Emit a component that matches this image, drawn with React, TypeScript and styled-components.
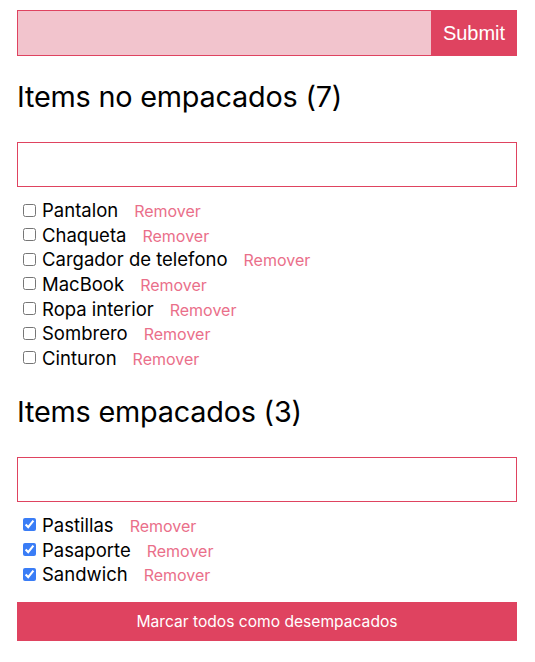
import React, { useState } from "react";
import styled, { createGlobalStyle } from "styled-components";

const GlobalStyle = createGlobalStyle`
  html, body { margin: 0; padding: 0; background: #ffffff; }
  body { font-family: Inter, "Noto Sans", sans-serif; color: #000; }
  * { box-sizing: border-box; }
`;

const RED = "#df4360";

const Page = styled.div`
  width: 500px;
  margin-left: 17px;
  padding-top: 10px;
  display: flex;
  flex-direction: column;
`;

const Form = styled.form`
  display: flex;
  height: 46px;
  margin: 0;
`;

const MainInput = styled.input`
  flex: 1;
  height: 100%;
  background: #f2c4cd;
  border: 1px solid ${RED};
  border-right: none;
  outline: none;
  font-size: 18px;
  padding: 0 10px;
`;

const SubmitButton = styled.button`
  width: 86px;
  height: 100%;
  background: ${RED};
  border: 1px solid ${RED};
  color: #fff;
  font-family: "Liberation Sans", Arial, sans-serif;
  font-size: 20px;
  padding: 0;
`;

const Heading = styled.h2<{ $top: number }>`
  margin: ${(p) => p.$top}px 0 0 0;
  font-size: 28.8px;
  line-height: 36px;
  font-weight: 400;
  letter-spacing: -0.2px;
`;

const FilterInput = styled.input`
  display: block;
  width: 100%;
  height: 45px;
  margin-top: 26.6px;
  border: 1px solid ${RED};
  background: #fff;
  outline: none;
  font-size: 18px;
  padding: 0 10px;
`;

const List = styled.ul`
  list-style: none;
  margin: 10.7px 0 0 0;
  padding: 0;
`;

const Row = styled.li`
  display: flex;
  align-items: center;
  height: 24.67px;
  padding-left: 1px;
`;

const Check = styled.input`
  width: 13px;
  height: 13px;
  margin: 0 6px 0 5px;
  accent-color: #3a7df6;
`;

const ItemName = styled.span`
  font-size: 18.5px;
  line-height: 24px;
  color: #000;
`;

const RemoveButton = styled.button`
  margin-left: 16px;
  padding: 0;
  border: none;
  background: none;
  color: #ea6f8a;
  font-family: Inter, "Noto Sans", sans-serif;
  font-size: 16px;
  line-height: 24px;
  margin-top: 2px;
  cursor: pointer;
`;

const WideButton = styled.button`
  margin-top: 15.4px;
  width: 100%;
  height: 39px;
  background: ${RED};
  border: 1px solid ${RED};
  color: #fff;
  font-family: Inter, "Noto Sans", sans-serif;
  font-size: 15.6px;
  padding: 0;
`;

type Item = { name: string; packed: boolean };

const initial: Item[] = [
  { name: "Pantalon", packed: false },
  { name: "Chaqueta", packed: false },
  { name: "Cargador de telefono", packed: false },
  { name: "MacBook", packed: false },
  { name: "Ropa interior", packed: false },
  { name: "Sombrero", packed: false },
  { name: "Cinturon", packed: false },
  { name: "Pastillas", packed: true },
  { name: "Pasaporte", packed: true },
  { name: "Sandwich", packed: true },
];

function ItemList({ items }: { items: Item[] }) {
  return (
    <List>
      {items.map((it) => (
        <Row key={it.name}>
          <Check type="checkbox" checked={it.packed} readOnly />
          <ItemName>{it.name}</ItemName>
          <RemoveButton type="button">Remover</RemoveButton>
        </Row>
      ))}
    </List>
  );
}

export default function App() {
  const [items] = useState(initial);
  const unpacked = items.filter((i) => !i.packed);
  const packed = items.filter((i) => i.packed);
  return (
    <>
      <GlobalStyle />
      <Page>
        <Form onSubmit={(e) => e.preventDefault()}>
          <MainInput type="text" />
          <SubmitButton type="submit">Submit</SubmitButton>
        </Form>
        <Heading $top={23.4}>Items no empacados ({unpacked.length})</Heading>
        <FilterInput type="text" />
        <ItemList items={unpacked} />
        <Heading $top={24.1}>Items empacados ({packed.length})</Heading>
        <FilterInput type="text" />
        <ItemList items={packed} />
        <WideButton type="button">Marcar todos como desempacados</WideButton>
      </Page>
    </>
  );
}
